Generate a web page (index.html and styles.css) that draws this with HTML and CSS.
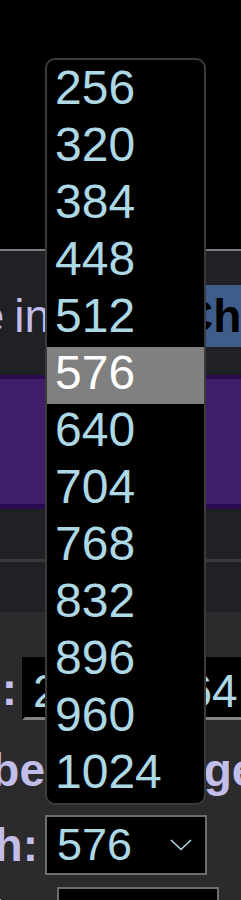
FILE: index.html
```html
<!DOCTYPE html>
<html lang="en">

<head>
  <meta charset="UTF-8">
  <title>Image Generator - Settings</title>
  <meta name="viewport" content="width=device-width, initial-scale=1.0">
  <link rel="stylesheet" href="styles.css">
</head>

<body>

  <div class="top-bar"></div>

  <div class="upload-row">
    <div class="upload-text"><span>Drop an image in</span></div>
    <button class="pick-btn">Choose File</button>
  </div>

  <div class="prompt-band"></div>

  <div class="tab-row"></div>
  <div class="tab-row"></div>

  <div class="settings">
    <div class="field">
      <div class="field-label label-seed"><span>Seed:</span></div>
      <input class="text-input seed-input" type="text" value="27391564">
    </div>

    <div class="check-line">
      <div class="check-start"><span>Describe</span></div>
      <span>an image</span>
    </div>

    <div class="field field-select">
      <div class="field-label label-width"><span>Width:</span></div>
      <div class="select-box">
        <span>576</span>
        <svg width="22" height="12" viewBox="0 0 22 12">
          <polyline points="1,1 11,10.5 21,1" fill="none" stroke="#add8e6" stroke-width="1.6" />
        </svg>
      </div>
    </div>

    <div class="field field-height">
      <div class="field-label label-height"><span>Height:</span></div>
      <input class="text-input height-input" type="text" value="896">
    </div>
  </div>

  <!-- open dropdown of the width select -->
  <ul class="size-menu">
    <li>256</li>
    <li>320</li>
    <li>384</li>
    <li>448</li>
    <li>512</li>
    <li class="selected">576</li>
    <li>640</li>
    <li>704</li>
    <li>768</li>
    <li>832</li>
    <li>896</li>
    <li>960</li>
    <li>1024</li>
  </ul>

</body>

</html>
```

FILE: styles.css
```css
:root {
  --bg: #202124;
  --panel: #2b2b2e;
  --divider: #3a3a3c;
  --purple: #3f1f69;
  --purple-dark: #2b0b50;
  --label: #c3bde9;
  --value: #add8e6;
  --accent: #3f5c8b;
  --field-border: #6e6e6e;
}

* {
  box-sizing: border-box;
  margin: 0;
  padding: 0;
}

html,
body {
  overflow: hidden;
}

body {
  font-family: 'Liberation Sans', Arial, sans-serif;
  background: var(--bg);
  min-height: 100vh;
  position: relative;
}

.top-bar {
  height: 251px;
  background: #000;
  border-bottom: 2px solid #7a7a7a;
}

.upload-row {
  height: 124px;
  display: flex;
  align-items: center;
  padding-top: 6px;
  font-size: 46px;
  white-space: nowrap;
}

.upload-text {
  width: 50px;
  flex-shrink: 0;
  display: flex;
  justify-content: flex-end;
  color: var(--label);
  word-spacing: -3px;
}

.pick-btn {
  flex-shrink: 0;
  margin-left: 122px;
  padding: 4px 8px;
  background: var(--accent);
  border: none;
  color: #000;
  font: inherit;
  font-weight: bold;
}

.prompt-band {
  height: 134px;
  background: var(--purple);
  border-top: 4px solid var(--purple-dark);
  border-bottom: 5px solid var(--purple-dark);
}

.tab-row {
  height: 50px;
  background: var(--bg);
}

.tab-row + .tab-row {
  border-top: 3px solid var(--divider);
  height: 53px;
}

.settings {
  background: var(--panel);
  padding-top: 45px;
  min-height: 300px;
  font-size: 46px;
  white-space: nowrap;
}

.field {
  display: flex;
  align-items: center;
}

.field-label {
  flex-shrink: 0;
  display: flex;
  justify-content: flex-end;
  color: var(--label);
  font-weight: bold;
}

.label-seed {
  width: 17px;
  margin-right: 5px;
}

.label-width {
  width: 38px;
  margin-right: 7px;
}

.label-height {
  width: 50px;
  margin-right: 7px;
}

.text-input {
  flex-shrink: 0;
  background: #000;
  color: var(--value);
  font-family: inherit;
  font-size: 45px;
  outline: none;
}

.seed-input {
  width: 240px;
  height: 63px;
  border: 3px inset #2f2f2f;
  padding: 5px 0 0 8px;
  font-size: 46px;
}

.check-line {
  display: flex;
  gap: 13px;
  margin-top: 23px;
  color: var(--label);
  font-weight: bold;
}

.check-start {
  width: 45px;
  flex-shrink: 0;
  display: flex;
  justify-content: flex-end;
}

.field-select {
  margin-top: 18px;
}

.select-box {
  width: 162px;
  height: 60px;
  border: 2px solid var(--field-border);
  background: #000;
  color: var(--value);
  font-size: 45px;
  line-height: 56px;
  padding: 0 13px 0 10px;
  display: flex;
  align-items: center;
  justify-content: space-between;
}

.field-height {
  margin-top: 12px;
}

.height-input {
  width: 162px;
  height: 60px;
  border: 2px solid var(--field-border);
  padding-left: 10px;
}

.size-menu {
  position: absolute;
  left: 45px;
  top: 58px;
  width: 161px;
  list-style: none;
  background: #000;
  border: 2px solid #3b3b3b;
  border-radius: 10px;
  padding-top: 2px;
  overflow: hidden;
}

.size-menu li {
  height: 57px;
  padding: 0 0 6px 8px;
  font-size: 48px;
  line-height: 51px;
  color: var(--value);
}

.size-menu li.selected {
  background: #808080;
  color: #fff;
}
```
